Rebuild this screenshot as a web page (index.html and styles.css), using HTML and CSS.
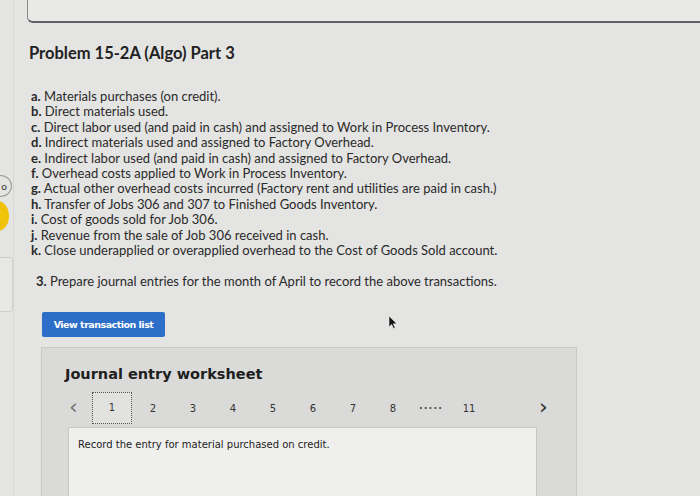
FILE: index.html
```html
<!DOCTYPE html>
<html>
<head>
<meta charset="utf-8">
<link rel="stylesheet" href="styles.css">
</head>
<body>
<div class="page">
  <aside class="rail">
    <div class="rail-circle"><span>o</span></div>
    <div class="rail-dot"></div>
    <div class="rail-box"></div>
  </aside>
  <main class="main">
    <div class="topbox"></div>
    <h1 class="title">Problem 15-2A (Algo) Part 3</h1>
    <ul class="items">
      <li><b>a.</b> Materials purchases (on credit).</li>
      <li><b>b.</b> Direct materials used.</li>
      <li><b>c.</b> Direct labor used (and paid in cash) and assigned to Work in Process Inventory.</li>
      <li><b>d.</b> Indirect materials used and assigned to Factory Overhead.</li>
      <li><b>e.</b> Indirect labor used (and paid in cash) and assigned to Factory Overhead.</li>
      <li><b>f.</b> Overhead costs applied to Work in Process Inventory.</li>
      <li><b>g.</b> Actual other overhead costs incurred (Factory rent and utilities are paid in cash.)</li>
      <li><b>h.</b> Transfer of Jobs 306 and 307 to Finished Goods Inventory.</li>
      <li><b>i.</b> Cost of goods sold for Job 306.</li>
      <li><b>j.</b> Revenue from the sale of Job 306 received in cash.</li>
      <li><b>k.</b> Close underapplied or overapplied overhead to the Cost of Goods Sold account.</li>
    </ul>
    <p class="task"><b>3.</b> Prepare journal entries for the month of April to record the above transactions.</p>
    <div class="btn-row">
      <button class="btn">View transaction list</button>
      <svg class="cursor" width="10" height="14" viewBox="0 0 10 14"><path d="M1 1 L1 12 L3.6 9.4 L5.6 13.5 L7.2 12.8 L5.3 8.8 L8.8 8.8 Z" fill="#111" stroke="#eee" stroke-width="0.6"/></svg>
    </div>
    <section class="journal">
      <h2 class="j-title">Journal entry worksheet</h2>
      <nav class="pager">
        <span class="arrow left">&lsaquo;</span>
        <span class="pg current">1</span>
        <span class="pg">2</span>
        <span class="pg">3</span>
        <span class="pg">4</span>
        <span class="pg">5</span>
        <span class="pg">6</span>
        <span class="pg">7</span>
        <span class="pg">8</span>
        <span class="dots">.....</span>
        <span class="pg">11</span>
        <span class="arrow right">&rsaquo;</span>
      </nav>
      <div class="entry">
        <p>Record the entry for material purchased on credit.</p>
      </div>
    </section>
  </main>
</div>
</body>
</html>
```
FILE: styles.css
```css
html, body {
  margin: 0;
  padding: 0;
  height: 100%;
  overflow: hidden;
}
body {
  background: #e4e4e2;
  font-family: "Lato", "Open Sans", sans-serif;
  color: #2a2a2a;
}
.page {
  display: grid;
  grid-template-columns: 14px 1fr;
  height: 496px;
}
.rail {
  display: flex;
  flex-direction: column;
  border-right: 1px solid #d8d8d6;
}
.rail-circle {
  margin-top: 175px;
  margin-left: -11px;
  width: 23px;
  height: 22px;
  border: 1px solid #9a9a98;
  border-radius: 50%;
  display: flex;
  align-items: center;
  justify-content: flex-end;
  font-size: 10px;
  padding-right: 4px;
  box-sizing: border-box;
  color: #333;
}
.rail-dot {
  margin-top: 4px;
  margin-left: -13px;
  width: 22px;
  height: 30px;
  border-radius: 50%;
  background: #f0c20a;
}
.rail-box {
  margin-top: 26px;
  margin-left: -6px;
  width: 17px;
  height: 53px;
  border: 1px solid #cfcfcd;
  border-radius: 3px;
  background: #e7e7e5;
}
.main {
  padding-left: 13px;
  display: flex;
  flex-direction: column;
}
.topbox {
  height: 21px;
  border-left: 1px solid #8a8a88;
  border-bottom: 2px solid #5f6166;
  border-bottom-left-radius: 6px;
  background: #e9e9e7;
}
.title {
  margin: 19px 0 0 2px;
  font-size: 16.5px;
  font-weight: 700;
  line-height: 22px;
  color: #222;
}
.items {
  list-style: none;
  margin: 25px 0 0 4px;
  padding: 0;
  font-size: 13px;
  line-height: 15.4px;
}
.items b, .task b {
  font-weight: 700;
}
.task {
  margin: 15px 0 0 9px;
  font-size: 13px;
  line-height: 16px;
}
.btn-row {
  display: flex;
  align-items: flex-start;
  margin-top: 23px;
  margin-left: 15px;
}
.btn {
  width: 123px;
  height: 25px;
  border: none;
  border-radius: 2px;
  background: #2d6ec8;
  color: #fff;
  font-family: "DejaVu Sans", sans-serif;
  font-weight: 700;
  font-size: 9.5px;
  letter-spacing: -0.5px;
  padding: 0;
  cursor: default;
}
.cursor {
  margin-left: 223px;
  margin-top: 3px;
}
.journal {
  margin-top: 10px;
  margin-left: 14px;
  width: 536px;
  flex: 1;
  background: #dadad8;
  border: 1px solid #c9c9c7;
  border-bottom: none;
  box-sizing: border-box;
  display: flex;
  flex-direction: column;
}
.j-title {
  margin: 16px 0 0 23px;
  font-family: "DejaVu Sans", sans-serif;
  font-size: 14.5px;
  font-weight: 700;
  line-height: 20px;
  color: #1e1e1e;
}
.pager {
  display: flex;
  align-items: center;
  margin: 8px 0 0 27px;
  height: 32px;
  font-family: "DejaVu Sans", sans-serif;
  font-size: 10px;
  color: #333;
}
.arrow {
  font-size: 22px;
  color: #777;
  line-height: 1;
  margin-top: -3px;
}
.arrow.left {
  width: 23px;
}
.arrow.right {
  margin-left: 50px;
  color: #333;
}
.pg {
  width: 40px;
  text-align: center;
}
.pg.current {
  width: 38px;
  height: 30px;
  line-height: 30px;
  border: 1px dotted #555;
  margin-right: 1px;
  background: #e2e2e0;
}
.dots {
  width: 36px;
  text-align: center;
  font-weight: 700;
  letter-spacing: 1px;
  color: #555;
  margin-top: -5px;
}
.entry {
  margin: 3px 0 0 26px;
  width: 469px;
  flex: 1;
  background: #efefed;
  border: 1px solid #c6c6c4;
  border-bottom: none;
  box-sizing: border-box;
}
.entry p {
  margin: 11px 0 0 9px;
  font-family: "DejaVu Sans", sans-serif;
  font-size: 10px;
  color: #222;
}
```
